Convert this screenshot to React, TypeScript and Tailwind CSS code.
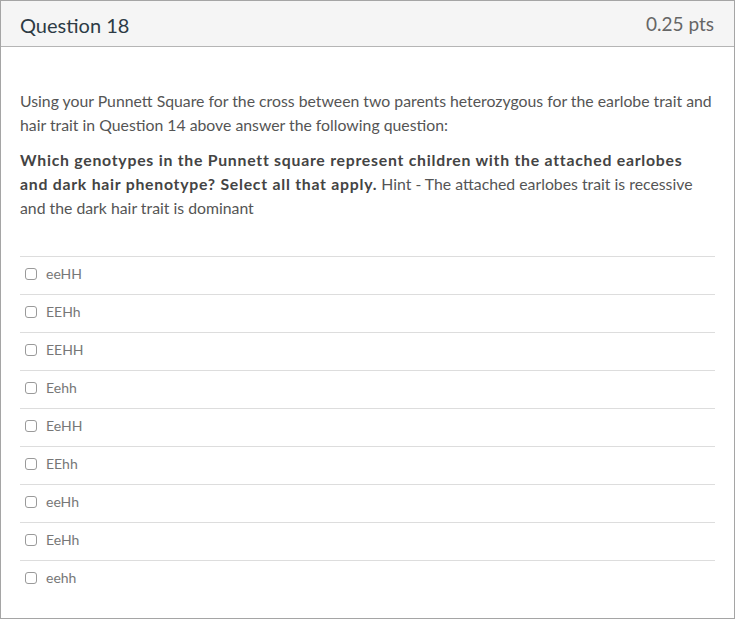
import React from "react";

const answers = ["eeHH", "EEHh", "EEHH", "Eehh", "EeHH", "EEhh", "eeHh", "EeHh", "eehh"];

export default function App() {
  return (
    <div className="w-[738px] h-[620px] bg-white" style={{ fontFamily: "Lato, 'Open Sans', sans-serif" }}>
      <div className="w-[735px] border border-[#a5a5a5] bg-white">
        {/* header */}
        <div className="flex h-[46px] items-center justify-between border-b border-[#b5b5b5] bg-[#f5f5f5] pl-[19px] pr-[20px] pt-[2px]">
          <div className="text-[20px] text-[#2d3b45]">Question 18</div>
          <div className="text-[19px] text-[#666]">0.25 pts</div>
        </div>

        {/* body */}
        <div className="px-[19px] pt-[42px] pb-[20px] text-[15.8px] leading-[24px] text-[#555]">
          <p>
            Using your Punnett Square for the cross between two parents heterozygous for the earlobe trait and hair
            trait in Question 14 above answer the following question:
          </p>
          <p className="mt-[11px]">
            <strong className="font-bold tracking-[0.75px] text-[#444]">
              Which genotypes in the Punnett square represent children with the attached earlobes and dark hair
              phenotype? Select all that apply.
            </strong>{" "}
            Hint - The attached earlobes trait is recessive and the dark hair trait is dominant
          </p>

          <div className="mt-[36px]">
            {answers.map((a) => (
              <label key={a} className="flex h-[38px] items-center gap-[9px] border-t border-[#ddd] pl-[5px] pb-[3px]">
                <span className="h-[12px] w-[12px] rounded-[3px] border border-[#9a9a9a] bg-white" />
                <span className="text-[14px] text-[#777]">{a}</span>
              </label>
            ))}
          </div>
        </div>
      </div>
    </div>
  );
}
